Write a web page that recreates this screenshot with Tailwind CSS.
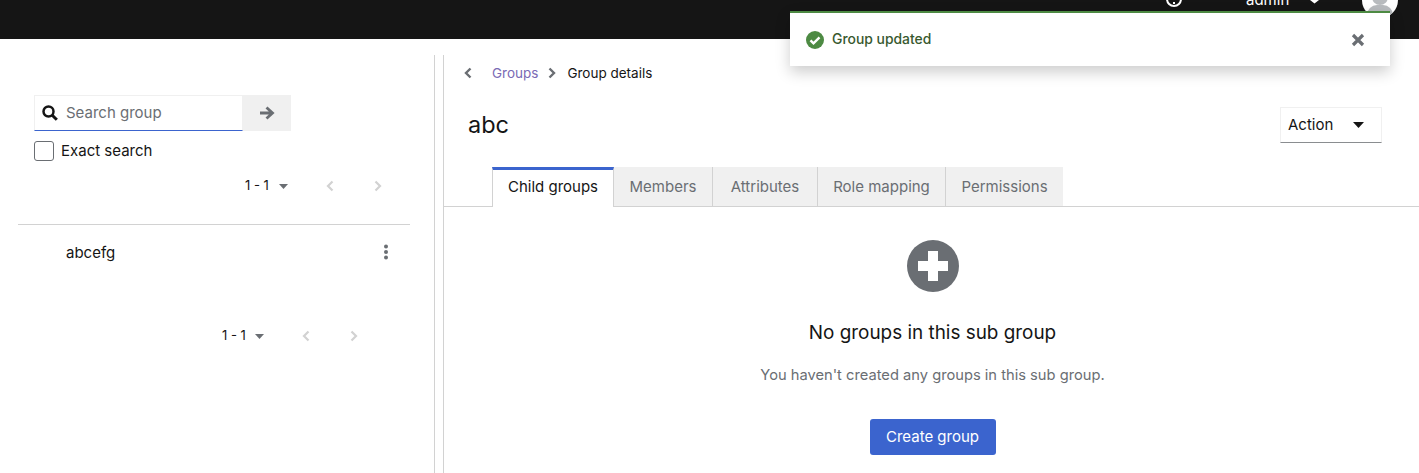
<!DOCTYPE html>
<html>
<head>
<meta charset="utf-8">
<script src="https://cdn.jsdelivr.net/npm/@tailwindcss/browser@4"></script>
</head>
<body class="bg-white font-['Inter',sans-serif] text-[#151515] overflow-hidden">
<div class="relative w-[1419px] h-[473px] overflow-hidden">
  <header class="h-[39px] bg-[#151515] relative overflow-hidden">
    <div class="absolute left-[1166px] top-[-9px] w-4 h-4 rounded-full border-2 border-white"></div>
    <div class="absolute left-[1173px] top-[2px] w-[2px] h-[2px] bg-white"></div>
    <span class="absolute left-[1246px] top-[-10px] text-[15px] leading-5 text-white">admin</span>
    <svg class="absolute left-[1309px] top-0" width="11" height="4" viewBox="0 0 11 4"><path d="M1 0h9L5.500 3.500z" fill="#fff"/></svg>
    <div class="absolute left-[1362px] top-[-18px] w-9 h-9 rounded-full bg-white overflow-hidden">
      <div class="absolute left-[10px] top-[7px] w-4 h-4 rounded-full bg-[#b8bbbe]"></div>
      <div class="absolute left-[5px] top-[23px] w-[26px] h-[20px] rounded-full bg-[#b8bbbe]"></div>
    </div>
  </header>

  <div class="absolute left-[790px] top-[11px] w-[600px] h-[55px] bg-white border-t-2 border-[#4d8a43] shadow-[0_6px_14px_rgba(3,3,3,0.2)] flex items-center pl-4 pr-[25px]">
    <svg width="18" height="18" viewBox="0 0 18 18" class="shrink-0"><circle cx="9" cy="9" r="9" fill="#4d8a43"/><path d="M4.500 9.300l3 3 6-6" fill="none" stroke="#fff" stroke-width="2.400"/></svg>
    <span class="ml-2 text-[13.900px] font-medium text-[#38592f]">Group updated</span>
    <svg class="ml-auto" width="14" height="14" viewBox="0 0 14 14"><path d="M2 2l10 10M12 2l-10 10" stroke="#6a6e73" stroke-width="3.200"/></svg>
  </div>

  <div class="flex h-[434px]">
    <aside class="w-[435px] shrink-0 border-r border-[#d2d2d2] mt-4 h-[418px] pl-[18px] pr-[24px]">
      <div class="pl-4 pt-10">
        <div class="flex w-[257px] h-9">
          <div class="w-[209px] h-9 border border-[#f0f0f0] border-b-[#3b64ce] flex items-center pl-[7px]">
            <svg width="16" height="16" viewBox="0 0 16 16"><circle cx="6.500" cy="6.500" r="5" fill="none" stroke="#151515" stroke-width="2.500"/><path d="M10 10l4.800 4.800" stroke="#151515" stroke-width="3"/></svg>
            <span class="ml-2 text-[15px] text-[#6a6e73]">Search group</span>
          </div>
          <div class="w-12 bg-[#f0f0f0] flex items-center justify-center">
            <svg width="16" height="14" viewBox="0 0 16 14"><path d="M1 7h12.500M7.500 1.500L13.500 7l-6 5.500" fill="none" stroke="#6a6e73" stroke-width="2.800"/></svg>
          </div>
        </div>
        <div class="flex items-center mt-[8px] h-6">
          <div class="w-5 h-5 border border-[#6a6e73] rounded-[3px]"></div>
          <span class="ml-[7px] text-[15px]">Exact search</span>
        </div>
        <div class="flex items-center mt-[11px] h-6 pl-[211px]">
          <span class="text-[13px] w-[25px]">1 - 1</span>
          <svg class="ml-[9px]" width="9" height="5" viewBox="0 0 9 5"><path d="M0 0h9L4.500 5z" fill="#6a6e73"/></svg>
          <svg class="ml-[38px]" width="8" height="12" viewBox="0 0 8 12"><path d="M6.500 1.500L2 6l4.500 4.500" fill="none" stroke="#d2d2d2" stroke-width="2.200"/></svg>
          <svg class="ml-[40px]" width="8" height="12" viewBox="0 0 8 12"><path d="M1.500 1.500L6 6l-4.500 4.500" fill="none" stroke="#d2d2d2" stroke-width="2.200"/></svg>
        </div>
      </div>
      <div class="border-t border-[#d2d2d2] mt-[26px] h-14 w-[392px] flex items-start pl-12 pr-[21px] pt-[19px] justify-between">
        <span class="text-[15px] leading-[18px]">abcefg</span>
        <svg width="6" height="16" viewBox="0 0 6 16"><circle cx="3" cy="2.500" r="2" fill="#6a6e73"/><circle cx="3" cy="8" r="2" fill="#6a6e73"/><circle cx="3" cy="13.500" r="2" fill="#6a6e73"/></svg>
      </div>
      <div class="flex items-center mt-[44px] h-6 pl-[204px]">
        <span class="text-[13px] w-[25px]">1 - 1</span>
        <svg class="ml-2" width="9" height="5" viewBox="0 0 9 5"><path d="M0 0h9L4.500 5z" fill="#6a6e73"/></svg>
        <svg class="ml-[38px]" width="8" height="12" viewBox="0 0 8 12"><path d="M6.500 1.500L2 6l4.500 4.500" fill="none" stroke="#d2d2d2" stroke-width="2.200"/></svg>
        <svg class="ml-[40px]" width="8" height="12" viewBox="0 0 8 12"><path d="M1.500 1.500L6 6l-4.500 4.500" fill="none" stroke="#d2d2d2" stroke-width="2.200"/></svg>
      </div>
    </aside>

    <main class="ml-2 flex-1 border-l border-[#d2d2d2] mt-4 min-w-0">
      <div class="flex items-center h-9 pl-5">
        <svg class="mt-[-1px]" width="8" height="12" viewBox="0 0 8 12"><path d="M6.500 1.500L2 6l4.500 4.500" fill="none" stroke="#6a6e73" stroke-width="2.400"/></svg>
        <span class="ml-5 text-[13.500px] text-[#7a6ab5]">Groups</span>
        <svg class="ml-[10px] mt-[-1px]" width="8" height="12" viewBox="0 0 8 12"><path d="M1.500 1.500L6 6l-4.500 4.500" fill="none" stroke="#6a6e73" stroke-width="2.400"/></svg>
        <span class="ml-[11px] text-[13.500px]">Group details</span>
      </div>
      <div class="flex items-center justify-between h-[36px] mt-[16px] pl-6 pr-[37px]">
        <h1 class="text-[23.500px] leading-8">abc</h1>
        <div class="w-[102px] h-[36px] border border-[#f0f0f0] border-b-[#8a8d90] flex items-center justify-between pl-[7px] pr-[17px] text-[15px]">
          <span>Action</span>
          <svg width="11" height="6" viewBox="0 0 11 6"><path d="M0 0h11L5.500 6z" fill="#151515"/></svg>
        </div>
      </div>
      <div class="mt-[24px] h-10 border-b border-[#d2d2d2] flex pl-12 text-[15px]">
        <div class="h-10 w-[122px] bg-white border-t-[3px] border-[#3b64ce] border-r border-r-[#d2d2d2] border-l border-l-[#d2d2d2] flex items-center justify-center pb-[3px]">Child groups</div>
        <div class="h-[39px] w-[99px] bg-[#f0f0f0] border-r border-[#d2d2d2] flex items-center justify-center text-[#6a6e73] pt-[1px]">Members</div>
        <div class="h-[39px] w-[105px] bg-[#f0f0f0] border-r border-[#d2d2d2] flex items-center justify-center text-[#6a6e73] pt-[1px]">Attributes</div>
        <div class="h-[39px] w-[128px] bg-[#f0f0f0] border-r border-[#d2d2d2] flex items-center justify-center text-[#6a6e73] pt-[1px]">Role mapping</div>
        <div class="h-[39px] w-[117px] bg-[#f0f0f0] flex items-center justify-center text-[#6a6e73] pt-[1px]">Permissions</div>
      </div>
      <div class="flex flex-col items-center pt-[33px] pl-[2px]">
        <svg width="52" height="52" viewBox="0 0 52 52"><circle cx="26" cy="26" r="26" fill="#6a6e73"/><path d="M26 11v30M11 26h30" stroke="#fff" stroke-width="10"/></svg>
        <h2 class="mt-[28px] text-[18.900px] leading-[26px]">No groups in this sub group</h2>
        <p class="mt-[17px] text-[14.700px] leading-[24px] text-[#6a6e73]">You haven't created any groups in this sub group.</p>
        <button class="mt-[32px] w-[126px] h-9 bg-[#3b64ce] rounded-[3px] text-white text-[15px]">Create group</button>
      </div>
    </main>
  </div>
</div>
</body>
</html>
